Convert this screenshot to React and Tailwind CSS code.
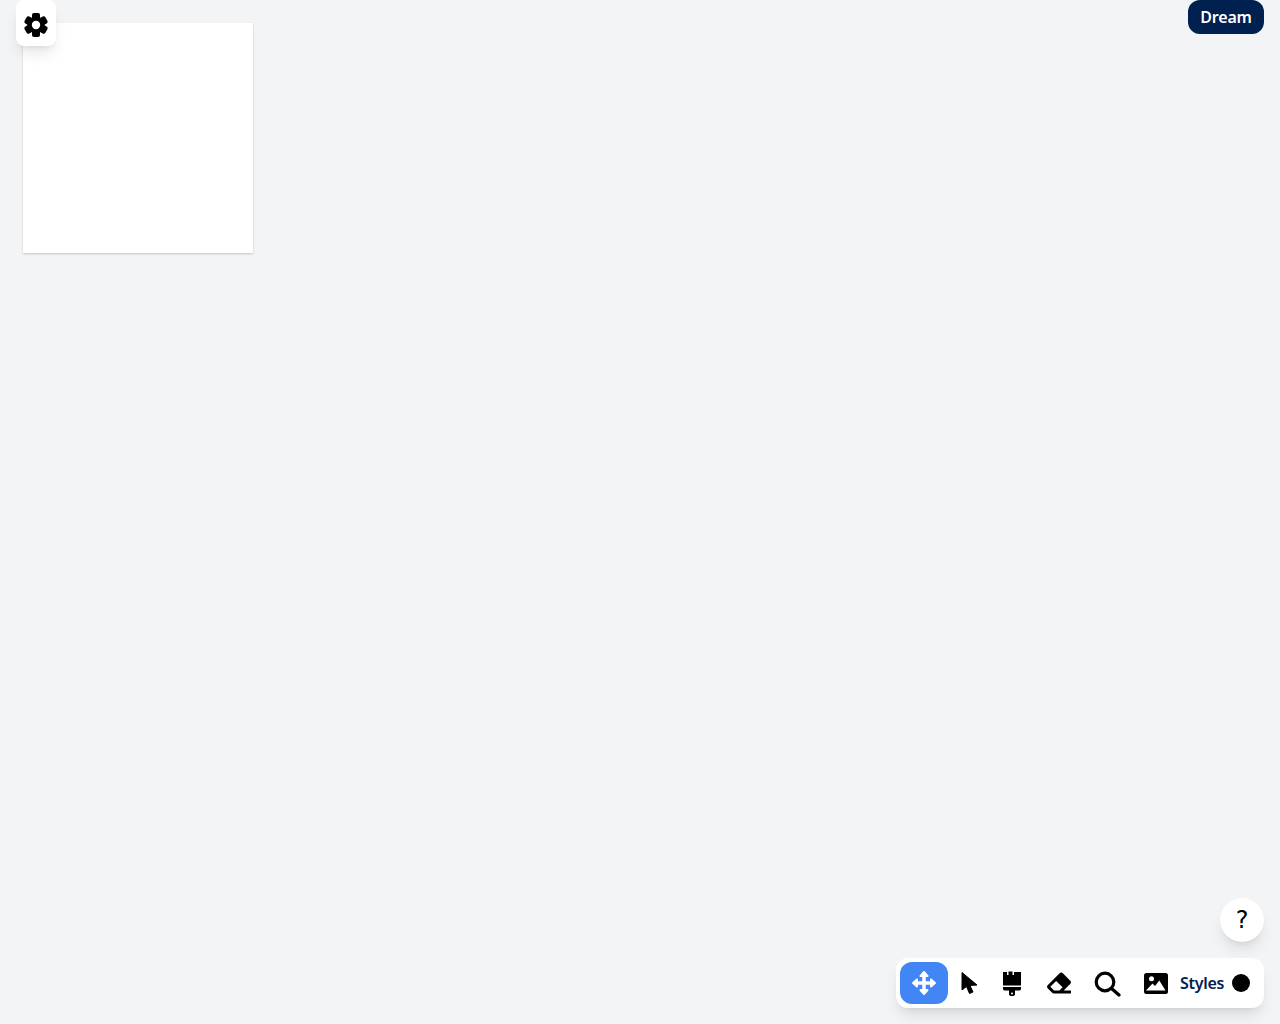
import { FaEraser } from "react-icons/fa";

function GearIcon() {
  return (
    <svg width="26" height="26" viewBox="0 0 26 26">
      <circle cx="13" cy="13" r="8.5" fill="#000" />
      <rect x="9" y="1" width="8" height="24" rx="2" fill="#000" />
      <rect x="9" y="1" width="8" height="24" rx="2" fill="#000" transform="rotate(60 13 13)" />
      <rect x="9" y="1" width="8" height="24" rx="2" fill="#000" transform="rotate(120 13 13)" />
      <circle cx="13" cy="13" r="4.2" fill="#fff" />
    </svg>
  );
}

function MoveIcon() {
  return (
    <svg width="26" height="26" viewBox="0 0 26 26" fill="#fff" stroke="#fff" strokeLinejoin="round">
      <rect x="5" y="11.5" width="16" height="3" strokeWidth="0.5" />
      <rect x="11.5" y="5" width="3" height="16" strokeWidth="0.5" />
      <path d="M13 2 L9.5 6 H16.5 Z" strokeWidth="2" />
      <path d="M13 24 L9.5 20 H16.5 Z" strokeWidth="2" />
      <path d="M2 13 L6 9.5 V16.5 Z" strokeWidth="2" />
      <path d="M24 13 L20 9.5 V16.5 Z" strokeWidth="2" />
    </svg>
  );
}

function CursorIcon() {
  return (
    <svg width="18" height="24" viewBox="0 0 18 24">
      <path d="M2 1.5 L2 19 L6.5 15.5 L9.5 22.5 L13 21 L10 14.5 L17 14 Z" fill="#000" stroke="#000" strokeLinejoin="round" />
    </svg>
  );
}

function BrushIcon() {
  return (
    <svg width="18" height="25" viewBox="0 0 18 25">
      <path d="M0 1 H4 V4 H5.5 V0.5 H9.5 V4 H11 V1 H18 V14.5 H0 Z" fill="#000" />
      <path d="M0 16 H18 V18 Q18 19.5 16 19.5 H12 V23 Q12 25 9 25 Q6 25 6 23 V19.5 H2 Q0 19.5 0 18 Z" fill="#000" />
      <circle cx="9" cy="22.5" r="1" fill="#fff" />
    </svg>
  );
}

function SearchIcon() {
  return (
    <svg width="28" height="28" viewBox="0 0 28 28" fill="none" stroke="#000" strokeWidth="3.2" strokeLinecap="round">
      <circle cx="11" cy="13" r="8.8" />
      <path d="M17.5 19.5 L25 26" />
    </svg>
  );
}

function ImageIcon() {
  return (
    <svg width="24" height="21" viewBox="0 0 24 21">
      <rect width="24" height="21" rx="2.5" fill="#000" />
      <circle cx="7.5" cy="5.8" r="2.5" fill="#fff" />
      <path d="M2 17.5 L8.5 10.5 L11 13 L15.3 7.5 L21.5 17.5 Z" fill="#fff" />
    </svg>
  );
}

export default function App() {
  return (
    <div className="relative h-[1024px] w-full overflow-hidden bg-[#f3f4f6] p-[23px] font-['Noto_Sans',sans-serif]">
      {/* canvas */}
      <div className="h-[230px] w-[230px] bg-white shadow-[0_1px_2px_rgba(0,0,0,0.2)]"></div>

      <button className="absolute left-4 top-0 flex h-[46px] w-10 items-center justify-center rounded-lg bg-white pt-[4px] shadow-lg">
        <GearIcon />
      </button>

      <button className="absolute right-4 top-0 flex h-[34px] w-[76px] items-center justify-center rounded-xl bg-[#002050] text-base font-semibold tracking-[-0.2px] text-white">
        Dream
      </button>

      <button className="absolute bottom-[82px] right-4 flex h-11 w-11 items-center justify-center rounded-full bg-white font-['DejaVu_Sans',sans-serif] text-2xl text-black shadow-lg">
        ?
      </button>

      {/* toolbar */}
      <div className="absolute bottom-4 right-4 flex h-[50px] w-[368px] items-center rounded-xl bg-white pl-1 shadow-lg">
        <button className="flex h-[42px] w-12 items-center justify-center rounded-xl bg-[#4285f4]">
          <MoveIcon />
        </button>
        <button className="flex h-[42px] w-[42px] items-center justify-center">
          <CursorIcon />
        </button>
        <button className="flex h-[42px] w-11 items-center justify-center">
          <BrushIcon />
        </button>
        <button className="flex h-[42px] w-[50px] items-center justify-center">
          <FaEraser size={24} />
        </button>
        <button className="flex h-[42px] w-12 items-center justify-center">
          <SearchIcon />
        </button>
        <button className="flex h-[42px] w-12 items-center justify-center">
          <ImageIcon />
        </button>
        <span className="text-base font-semibold tracking-[-0.3px] text-[#002050]">Styles</span>
        <span className="ml-2 h-[18px] w-[18px] rounded-full bg-black"></span>
      </div>
    </div>
  );
}
